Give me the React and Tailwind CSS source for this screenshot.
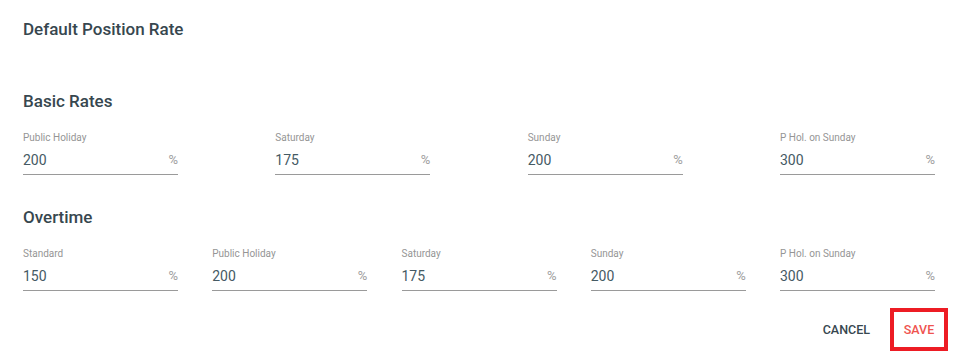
import React from "react";

function Field({ label, value }) {
  return (
    <div className="w-[155px]">
      <div className="text-[10px] leading-[12px] text-[#959595]">{label}</div>
      <div className="mt-[6px] flex h-[25px] items-start justify-between border-b border-[#9a9a9a]">
        <span className="text-[14px] leading-[20px] text-[#455a64]">{value}</span>
        <span className="text-[13px] leading-[20px] text-[#9e9e9e]">%</span>
      </div>
    </div>
  );
}

export default function App() {
  const basic = [
    ["Public Holiday", "200"],
    ["Saturday", "175"],
    ["Sunday", "200"],
    ["P Hol. on Sunday", "300"],
  ];
  const overtime = [
    ["Standard", "150"],
    ["Public Holiday", "200"],
    ["Saturday", "175"],
    ["Sunday", "200"],
    ["P Hol. on Sunday", "300"],
  ];
  return (
    <div className="h-[358px] w-[958px] bg-white px-[23px] pt-[19px] font-['Roboto',sans-serif]">
      <div className="text-[17px] font-medium leading-[20px] text-[#37474f]">Default Position Rate</div>
      <div className="mt-[52px] text-[17px] font-medium leading-[20px] text-[#37474f]">Basic Rates</div>
      <div className="mt-[21px] flex justify-between">
        {basic.map(([l, v]) => (
          <Field key={l} label={l} value={v} />
        ))}
      </div>
      <div className="mt-[32px] text-[17px] font-medium leading-[20px] text-[#37474f]">Overtime</div>
      <div className="mt-[21px] flex justify-between">
        {overtime.map(([l, v]) => (
          <Field key={l} label={l} value={v} />
        ))}
      </div>
      <div className="-mr-[13px] mt-[17px] flex items-center justify-end gap-[20px]">
        <button className="text-[12.5px] font-medium leading-[20px] text-[#37474f]">CANCEL</button>
        <button className="flex h-[43px] w-[58px] items-center justify-center border-4 border-[#ed1c24] text-[12.5px] font-medium leading-[20px] text-[#ef5350]">
          SAVE
        </button>
      </div>
    </div>
  );
}
